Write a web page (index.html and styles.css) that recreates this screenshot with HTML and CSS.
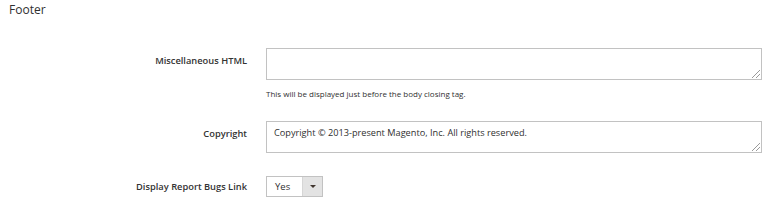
FILE: index.html
```html
<!DOCTYPE html>
<html lang="en">
<head>
  <meta charset="UTF-8" />
  <title>Footer</title>
  <link rel="stylesheet" href="styles.css">
</head>
<body>
  <div class="section">
    <h2 class="section-title">Footer</h2>

    <div class="field field-misc">
      <label class="field-label">Miscellaneous HTML</label>
      <div class="field-control">
        <div class="textarea"><span class="grip"></span></div>
        <p class="note">This will be displayed just before the body closing tag.</p>
      </div>
    </div>

    <div class="field field-copy">
      <label class="field-label">Copyright</label>
      <div class="field-control">
        <div class="textarea">Copyright &copy; 2013-present Magento, Inc. All rights reserved.<span class="grip"></span></div>
      </div>
    </div>

    <div class="field field-bugs">
      <label class="field-label">Display Report Bugs Link</label>
      <div class="field-control">
        <div class="select">
          <span class="select-value">Yes</span>
          <span class="select-arrow"></span>
        </div>
      </div>
    </div>
  </div>
</body>
</html>
```

FILE: styles.css
```css
body {
  margin: 0;
  background: #fff;
  font-family: "Open Sans", sans-serif;
  color: #303030;
}

.section {
  padding: 1px 6px 0 9px;
}

.section-title {
  margin: 0;
  font-size: 12px;
  font-weight: 400;
  line-height: 17px;
  color: #303030;
}

/* Rows */
.field {
  display: grid;
  grid-template-columns: 238px 1fr;
  column-gap: 19px;
  align-items: start;
}

.field-misc {
  margin-top: 30px;
}

.field-copy {
  margin-top: 21px;
}

.field-bugs {
  margin-top: 23px;
}

.field-label {
  text-align: right;
  font-size: 9.3px;
  font-weight: 600;
  line-height: 13px;
  padding-top: 6px;
  color: #333;
}

.field-bugs .field-label {
  padding-top: 4px;
}

/* Inputs */
.textarea {
  position: relative;
  box-sizing: border-box;
  height: 32px;
  border: 1px solid #c2c2c2;
  background: #fff;
  font-size: 9.2px;
  line-height: 13px;
  padding: 4px 7px;
  color: #303030;
}

.grip {
  position: absolute;
  right: 1px;
  bottom: 1px;
  width: 8px;
  height: 8px;
  background: linear-gradient(135deg, transparent 45%, #9a9a9a 45%, #9a9a9a 55%, transparent 55%, transparent 70%, #9a9a9a 70%, #9a9a9a 80%, transparent 80%);
}

.note {
  margin: 8px 0 0;
  font-size: 8px;
  line-height: 12px;
  color: #303030;
}

.select {
  display: flex;
  width: 57px;
  height: 21px;
  box-sizing: border-box;
  border: 1px solid #c2c2c2;
  background: #fff;
  font-size: 9.5px;
}

.select-value {
  box-sizing: border-box;
  width: 35px;
  padding-left: 8px;
  line-height: 19px;
}

.select-arrow {
  flex: 1;
  border-left: 1px solid #d6d6d6;
  background: #e3e3e3;
  position: relative;
}

.select-arrow::after {
  content: "";
  position: absolute;
  left: 7px;
  top: 8px;
  border-left: 3px solid transparent;
  border-right: 3px solid transparent;
  border-top: 3px solid #41362f;
}
```
